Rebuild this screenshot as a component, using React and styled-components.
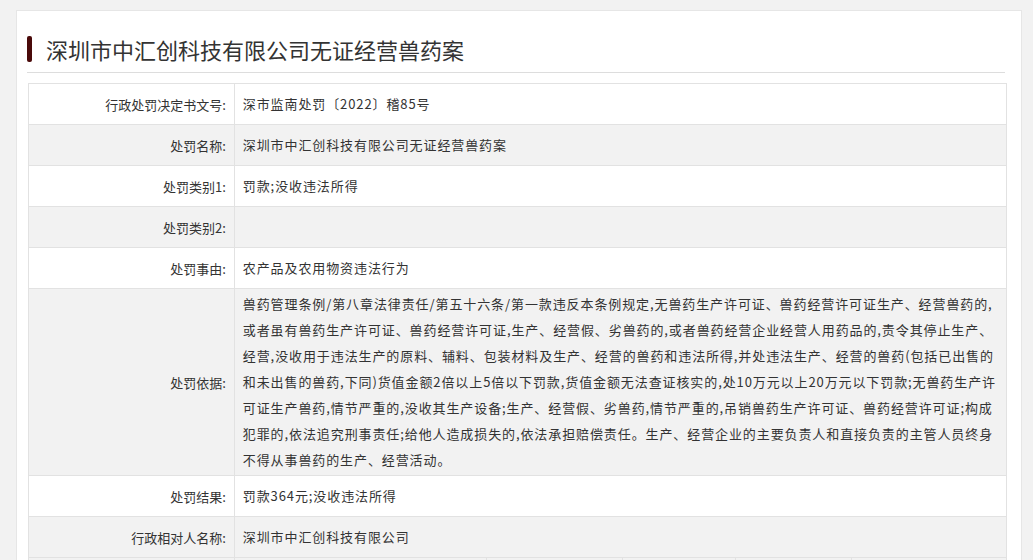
import styled, { createGlobalStyle } from "styled-components";

const Global = createGlobalStyle`
  html, body { margin: 0; background: #f2f2f2; }
  body { font-family: "Microsoft YaHei", "Noto Sans CJK SC", "Liberation Sans", sans-serif; color: #333; }
`;

const Panel = styled.div`
  margin: 10px 11px 0 16px;
  background: #fff;
  border: 1px solid #e6e6e6;
  padding: 20px 16px 0 10px;
  height: 560px;
  box-sizing: border-box;
`;

const Title = styled.h1`
  display: flex;
  align-items: center;
  gap: 14px;
  margin: 0;
  padding: 2px 0 7px;
  font-size: 22px;
  font-weight: normal;
  border-bottom: 1px solid #ddd;
  &::before {
    content: "";
    width: 5px;
    height: 26px;
    border-radius: 2px;
    background: #4a0a0a;
  }
`;

const Table = styled.table`
  margin: 10px 0 0 1px;
  width: 979px;
  border-collapse: collapse;
  font-size: 13px;
`;

const Row = styled.tr`
  background: ${(p) => (p.$alt ? "#f2f2f2" : "#fff")};
`;

const Label = styled.td`
  width: 192px;
  text-align: right;
  padding: 0 8px;
  height: 40px;
  border: 1px solid #e2e2e2;
`;

const Value = styled.td`
  padding: 2px 8px;
  line-height: 26px;
  letter-spacing: 0.9px;
  border: 1px solid #e2e2e2;
`;

const basis =
  "兽药管理条例/第八章法律责任/第五十六条/第一款违反本条例规定,无兽药生产许可证、兽药经营许可证生产、经营兽药的,或者虽有兽药生产许可证、兽药经营许可证,生产、经营假、劣兽药的,或者兽药经营企业经营人用药品的,责令其停止生产、经营,没收用于违法生产的原料、辅料、包装材料及生产、经营的兽药和违法所得,并处违法生产、经营的兽药(包括已出售的和未出售的兽药,下同)货值金额2倍以上5倍以下罚款,货值金额无法查证核实的,处10万元以上20万元以下罚款;无兽药生产许可证生产兽药,情节严重的,没收其生产设备;生产、经营假、劣兽药,情节严重的,吊销兽药生产许可证、兽药经营许可证;构成犯罪的,依法追究刑事责任;给他人造成损失的,依法承担赔偿责任。生产、经营企业的主要负责人和直接负责的主管人员终身不得从事兽药的生产、经营活动。";

const rows = [
  ["行政处罚决定书文号:", "深市监南处罚〔2022〕稽85号"],
  ["处罚名称:", "深圳市中汇创科技有限公司无证经营兽药案"],
  ["处罚类别1:", "罚款;没收违法所得"],
  ["处罚类别2:", ""],
  ["处罚事由:", "农产品及农用物资违法行为"],
  ["处罚依据:", basis],
  ["处罚结果:", "罚款364元;没收违法所得"],
  ["行政相对人名称:", "深圳市中汇创科技有限公司"],
];

const SplitCell = styled.td`
  border: 1px solid #e2e2e2;
  height: 40px;
  width: ${(p) => p.$w}px;
`;

export default function App() {
  return (
    <>
      <Global />
      <Panel>
        <Title>深圳市中汇创科技有限公司无证经营兽药案</Title>
        <Table>
          <tbody>
            {rows.map(([l, v], i) => (
              <Row key={l} $alt={i % 2 === 1}>
                <Label>{l}</Label>
                <Value colSpan={5}>{v}</Value>
              </Row>
            ))}
            <Row $alt>
              <Label />
              <SplitCell $w={253} />
              <SplitCell $w={136} />
              <SplitCell $w={112} />
              <SplitCell $w={114} />
              <SplitCell $w={155} />
            </Row>
          </tbody>
        </Table>
      </Panel>
    </>
  );
}
